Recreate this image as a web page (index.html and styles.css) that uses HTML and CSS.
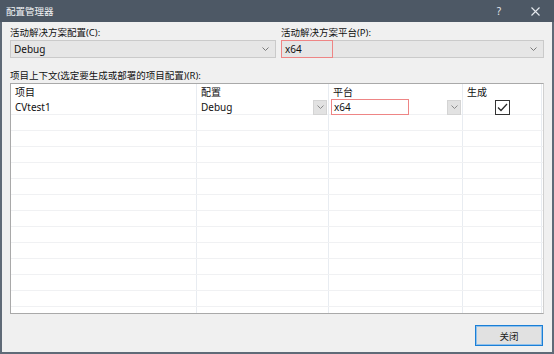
FILE: index.html
```html
<!DOCTYPE html>
<html lang="zh-CN">
<head>
    <meta charset="UTF-8">
    <title>配置管理器</title>
    <link rel="stylesheet" href="styles.css">
</head>
<body>

    <div class="window">
        <div class="titlebar">
            <span class="title">配置管理器</span>
            <span class="title-btn help">?</span>
            <span class="title-btn close">
                <svg width="9" height="9" viewBox="0 0 9 9"><path d="M0.5 0.5 L8.5 8.5 M8.5 0.5 L0.5 8.5" stroke="#e6e9ee" stroke-width="1.1"/></svg>
            </span>
        </div>

        <div class="content">
            <div class="top-fields">
                <div class="field">
                    <label>活动解决方案配置(C):</label>
                    <div class="combo">
                        <span class="combo-text">Debug</span>
                        <svg class="chev" width="7" height="4" viewBox="0 0 7 4"><path d="M0.5 0.5 L3.5 3.5 L6.5 0.5" fill="none" stroke="#7a7a7a"/></svg>
                    </div>
                </div>
                <div class="field">
                    <label>活动解决方案平台(P):</label>
                    <div class="combo">
                        <span class="combo-text marked">x64</span>
                        <svg class="chev" width="7" height="4" viewBox="0 0 7 4"><path d="M0.5 0.5 L3.5 3.5 L6.5 0.5" fill="none" stroke="#7a7a7a"/></svg>
                    </div>
                </div>
            </div>

            <label class="grid-label">项目上下文(选定要生成或部署的项目配置)(R):</label>

            <div class="grid">
                <div class="row head">
                    <div class="cell">项目</div>
                    <div class="cell">配置</div>
                    <div class="cell">平台</div>
                    <div class="cell">生成</div>
                </div>
                <div class="row">
                    <div class="cell">CVtest1</div>
                    <div class="cell cell-combo">
                        <span>Debug</span>
                        <span class="mini-btn"><svg width="7" height="4" viewBox="0 0 7 4"><path d="M0.5 0.5 L3.5 3.5 L6.5 0.5" fill="none" stroke="#8a8a8a"/></svg></span>
                    </div>
                    <div class="cell cell-combo">
                        <span class="cell-marked">x64</span>
                        <span class="mini-btn"><svg width="7" height="4" viewBox="0 0 7 4"><path d="M0.5 0.5 L3.5 3.5 L6.5 0.5" fill="none" stroke="#8a8a8a"/></svg></span>
                    </div>
                    <div class="cell cell-check">
                        <span class="checkbox"><svg width="11" height="9" viewBox="0 0 11 9"><path d="M1 4.5 L4 7.5 L10 1" fill="none" stroke="#2b2b2b" stroke-width="1.3"/></svg></span>
                    </div>
                </div>
                <div class="row"><div class="cell"></div><div class="cell"></div><div class="cell"></div><div class="cell"></div></div>
                <div class="row"><div class="cell"></div><div class="cell"></div><div class="cell"></div><div class="cell"></div></div>
                <div class="row"><div class="cell"></div><div class="cell"></div><div class="cell"></div><div class="cell"></div></div>
                <div class="row"><div class="cell"></div><div class="cell"></div><div class="cell"></div><div class="cell"></div></div>
                <div class="row"><div class="cell"></div><div class="cell"></div><div class="cell"></div><div class="cell"></div></div>
                <div class="row"><div class="cell"></div><div class="cell"></div><div class="cell"></div><div class="cell"></div></div>
                <div class="row"><div class="cell"></div><div class="cell"></div><div class="cell"></div><div class="cell"></div></div>
                <div class="row"><div class="cell"></div><div class="cell"></div><div class="cell"></div><div class="cell"></div></div>
                <div class="row"><div class="cell"></div><div class="cell"></div><div class="cell"></div><div class="cell"></div></div>
                <div class="row"><div class="cell"></div><div class="cell"></div><div class="cell"></div><div class="cell"></div></div>
                <div class="row"><div class="cell"></div><div class="cell"></div><div class="cell"></div><div class="cell"></div></div>
                <div class="row"><div class="cell"></div><div class="cell"></div><div class="cell"></div><div class="cell"></div></div>
                <div class="row filler"><div class="cell"></div><div class="cell"></div><div class="cell"></div><div class="cell"></div></div>
            </div>

            <div class="footer">
                <button class="btn">关闭</button>
            </div>
        </div>
    </div>

</body>
</html>
```

FILE: styles.css
```css
body {
    margin: 0;
    padding: 0;
    font-family: "Noto Sans", "Noto Sans CJK SC", sans-serif;
    font-size: 9.5px;
    color: #111111;
    background-color: #f0f0f0;
}

.window {
    width: 554px;
    height: 354px;
    box-sizing: border-box;
    border: 2px solid #5f6a77;
    border-top: none;
    display: flex;
    flex-direction: column;
    background-color: #f0f0f0;
}

.titlebar {
    height: 22px;
    margin: 0 -2px;
    background-color: #4d5865;
    display: flex;
    align-items: center;
    padding-left: 6px;
    color: #f2f4f6;
}

.title {
    flex: 1;
    font-size: 9.5px;
}

.title-btn {
    display: flex;
    align-items: center;
    justify-content: center;
    color: #e6e9ee;
    font-size: 10px;
}

.help {
    width: 20px;
    margin-right: 16px;
}

.close {
    width: 20px;
    margin-right: 9px;
}

.content {
    flex: 1;
    display: flex;
    flex-direction: column;
    padding: 0 8px 0 8px;
}

.top-fields {
    display: flex;
    gap: 5px;
    margin-top: 4px;
}

.field {
    flex: 1;
    display: flex;
    flex-direction: column;
}

.field:first-child {
    flex: 0 0 266px;
}

label {
    display: block;
    height: 13px;
    line-height: 13px;
    margin-bottom: 1px;
}

.combo {
    height: 18px;
    box-sizing: border-box;
    border: 1px solid #cacaca;
    background-color: #e6e6e6;
    display: flex;
    align-items: center;
    justify-content: space-between;
    padding-right: 6px;
}

.combo-text {
    padding-left: 3px;
    font-size: 10px;
}

.combo-text.marked {
    height: 18px;
    width: 52px;
    box-sizing: border-box;
    margin: -1px 0 0 -1px;
    border: 1px solid #ee8585;
    display: flex;
    align-items: center;
}

.grid-label {
    margin-top: 11px;
    margin-bottom: 0;
}

.grid {
    margin-top: 1px;
    height: 231px;
    box-sizing: border-box;
    border: 1px solid #a9a9a9;
    border-right-color: #d0d0d0;
    background-color: #ffffff;
    display: flex;
    flex-direction: column;
    overflow: hidden;
}

.row {
    display: grid;
    grid-template-columns: 186px 132px 134px 79px;
    height: 16px;
    box-sizing: border-box;
    border-bottom: 1px solid #f0f1f3;
    flex: none;
}

.row.head {
    height: 15px;
    border-bottom: none;
}

.row.filler {
    flex: 1;
    border-bottom: none;
}

.cell {
    border-right: 1px solid #e8ecf1;
    padding-left: 4px;
    display: flex;
    align-items: center;
    font-size: 10px;
    white-space: nowrap;
}

.cell-combo {
    justify-content: space-between;
    padding-right: 0;
}

.mini-btn {
    width: 14px;
    height: 15px;
    box-sizing: border-box;
    border: 1px solid #d4d4d4;
    background-color: #e2e2e2;
    display: flex;
    align-items: center;
    justify-content: center;
    margin-right: 1px;
}

.cell-marked {
    width: 78px;
    height: 16px;
    box-sizing: border-box;
    margin-left: -2px;
    border: 1px solid #ee8585;
    display: flex;
    align-items: center;
    padding-left: 2px;
}

.cell-check {
    justify-content: center;
    padding-left: 0;
}

.checkbox {
    width: 15px;
    height: 15px;
    box-sizing: border-box;
    border: 1px solid #333333;
    background-color: #ffffff;
    display: flex;
    align-items: center;
    justify-content: center;
}

.footer {
    display: flex;
    justify-content: flex-end;
    padding-top: 11px;
    padding-right: 1px;
}

.btn {
    width: 68px;
    height: 21px;
    border: 1px solid #1b7fd6;
    box-shadow: inset 0 0 0 1px #8fc1ec;
    background-color: #e1e1e1;
    font-family: "Noto Sans", "Noto Sans CJK SC", sans-serif;
    font-size: 9.5px;
    color: #1b1b1b;
    padding: 0;
}
```
